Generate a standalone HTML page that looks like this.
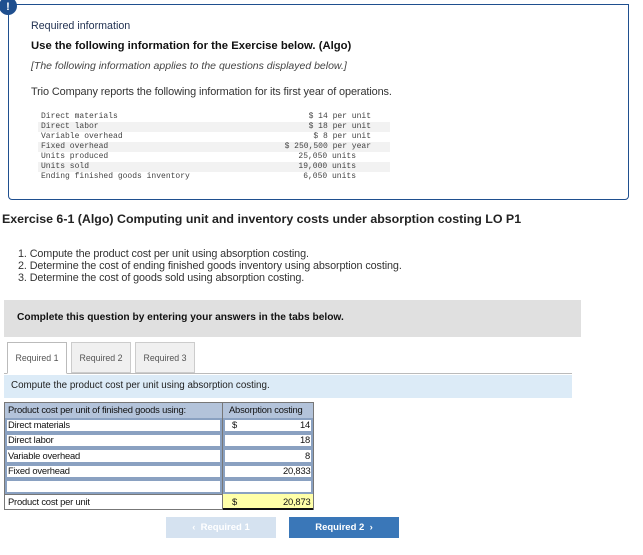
<!DOCTYPE html>
<html><head><style>
*{margin:0;padding:0;box-sizing:border-box}
body{width:643px;height:555px;background:#fff;font-family:"Liberation Sans",Arial,sans-serif;color:#222;position:relative;overflow:hidden}
.abs{position:absolute;white-space:nowrap}
.box{position:absolute;left:8px;top:4px;width:621px;height:196px;border:1.5px solid #1f4f8f;border-radius:0 0 4px 4px}
.badge{position:absolute;left:-1px;top:-3px;width:18px;height:18px;border-radius:50%;background:#1f4f8f;color:#fff;font-weight:bold;font-size:11px;text-align:center;line-height:20px}
.mono{font-family:"Liberation Mono","DejaVu Sans Mono",monospace;font-size:8px;color:#444}
.drow{position:absolute;left:38px;width:352px;height:10px;line-height:10px}
.drow.g{background:#f2f2f2}
.drow span{position:absolute;left:3px}
.drow b{position:absolute;right:19px;font-weight:normal}
.tab{position:absolute;top:342px;width:60px;height:31px;border:1px solid #ccc;background:#f0f0f0;font-size:8.8px;color:#555;text-align:center;line-height:30px}
.t{position:absolute;font-size:9.4px;font-family:"Liberation Sans",Arial,sans-serif;color:#111;letter-spacing:-0.2px}
.cell{position:absolute;background:#fff;border:2px solid #8aa1c1}
</style></head><body>
<div class="box"></div>
<div class="badge">!</div>
<div class="abs" style="left:31px;top:20px;font-size:10.7px;color:#1f2f4f">Required information</div>
<div class="abs" style="left:31px;top:40px;font-size:11.3px;font-weight:bold;color:#111">Use the following information for the Exercise below. (Algo)</div>
<div class="abs" style="left:31px;top:60px;font-size:10.5px;font-style:italic;color:#444">[The following information applies to the questions displayed below.]</div>
<div class="abs" style="left:31px;top:86px;font-size:10.9px;color:#333;letter-spacing:-0.1px">Trio Company reports the following information for its first year of operations.</div>
<div class="mono">
<div class="drow" style="top:112px"><span>Direct materials</span><b>$ 14 per unit</b></div>
<div class="drow g" style="top:122px"><span>Direct labor</span><b>$ 18 per unit</b></div>
<div class="drow" style="top:132px"><span>Variable overhead</span><b>$ 8 per unit</b></div>
<div class="drow g" style="top:142px"><span>Fixed overhead</span><b>$ 250,500 per year</b></div>
<div class="drow" style="top:152px"><span>Units produced</span><b style="right:34px">25,050 units</b></div>
<div class="drow g" style="top:162px"><span>Units sold</span><b style="right:34px">19,000 units</b></div>
<div class="drow" style="top:172px"><span>Ending finished goods inventory</span><b style="right:34px">6,050 units</b></div>
</div>
<div class="abs" style="left:2px;top:212px;font-size:12.4px;font-weight:bold;color:#222">Exercise 6-1 (Algo) Computing unit and inventory costs under absorption costing LO P1</div>
<div class="abs" style="left:18px;top:249px;font-size:10.8px;color:#333;line-height:11.8px;letter-spacing:-0.1px">1. Compute the product cost per unit using absorption costing.<br>2. Determine the cost of ending finished goods inventory using absorption costing.<br>3. Determine the cost of goods sold using absorption costing.</div>
<div class="abs" style="left:4px;top:300px;width:577px;height:37px;background:#e0e0e0"></div>
<div class="abs" style="left:17px;top:312px;font-size:10.2px;font-weight:bold;color:#111">Complete this question by entering your answers in the tabs below.</div>
<div class="abs" style="left:4px;top:373px;width:568px;height:1px;background:#bbb"></div>
<div class="tab" style="left:7px;background:#fff;border-color:#bbb;border-bottom:1px solid #fff;height:32px">Required 1</div>
<div class="tab" style="left:71px">Required 2</div>
<div class="tab" style="left:135px">Required 3</div>
<div class="abs" style="left:4px;top:375px;width:568px;height:23px;background:#dcebf7"></div>
<div class="t" style="left:11px;top:380px;color:#222;font-size:9.8px;letter-spacing:0">Compute the product cost per unit using absorption costing.</div>
<div class="abs" style="left:4px;top:402px;width:310px;height:108px;border:1px solid #777;background:#fff"></div>
<div class="abs" style="left:5px;top:403px;width:217px;height:15px;background:#b3c3da"></div>
<div class="abs" style="left:223px;top:403px;width:90px;height:15px;background:#b3c3da"></div>
<div class="abs" style="left:222px;top:402px;width:1px;height:108px;background:#777"></div>
<div class="t" style="left:8px;top:404px">Product cost per unit of finished goods using:</div>
<div class="t" style="left:229px;top:404px">Absorption costing</div>
<div class="cell" style="left:5px;top:418px;width:217px;height:15px"></div><div class="cell" style="left:223px;top:418px;width:90px;height:15px"></div>
<div class="cell" style="left:5px;top:433px;width:217px;height:15px"></div><div class="cell" style="left:223px;top:433px;width:90px;height:15px"></div>
<div class="cell" style="left:5px;top:448px;width:217px;height:16px"></div><div class="cell" style="left:223px;top:448px;width:90px;height:16px"></div>
<div class="cell" style="left:5px;top:464px;width:217px;height:15px"></div><div class="cell" style="left:223px;top:464px;width:90px;height:15px"></div>
<div class="cell" style="left:5px;top:479px;width:217px;height:15px"></div><div class="cell" style="left:223px;top:479px;width:90px;height:15px"></div>
<div class="abs" style="left:5px;top:494px;width:217px;height:1px;background:#777"></div>
<div class="abs" style="left:223px;top:494px;width:90px;height:16px;background:#ffffa8;border-bottom:2px solid #111"></div>
<div class="t" style="left:8px;top:419px">Direct materials</div>
<div class="t" style="left:8px;top:434px">Direct labor</div>
<div class="t" style="left:8px;top:450px">Variable overhead</div>
<div class="t" style="left:8px;top:465px">Fixed overhead</div>
<div class="t" style="left:8px;top:496px">Product cost per unit</div>
<div class="t" style="left:232px;top:419px">$</div><div class="t" style="left:300px;top:419px">14</div>
<div class="t" style="left:300px;top:434px">18</div>
<div class="t" style="left:305px;top:450px">8</div>
<div class="t" style="left:283px;top:465px">20,833</div>
<div class="t" style="left:232px;top:496px">$</div><div class="t" style="left:283px;top:496px">20,873</div>
<div class="abs" style="left:166px;top:517px;width:110px;height:21px;background:#d5e2f0;color:#fff;font-size:9.5px;font-weight:bold;text-align:center;line-height:21px">&lsaquo;&nbsp; Required 1</div>
<div class="abs" style="left:289px;top:517px;width:110px;height:21px;background:#3a77b8;color:#fff;font-size:9.5px;font-weight:bold;text-align:center;line-height:21px">Required 2 &nbsp;&rsaquo;</div>
</body></html>
